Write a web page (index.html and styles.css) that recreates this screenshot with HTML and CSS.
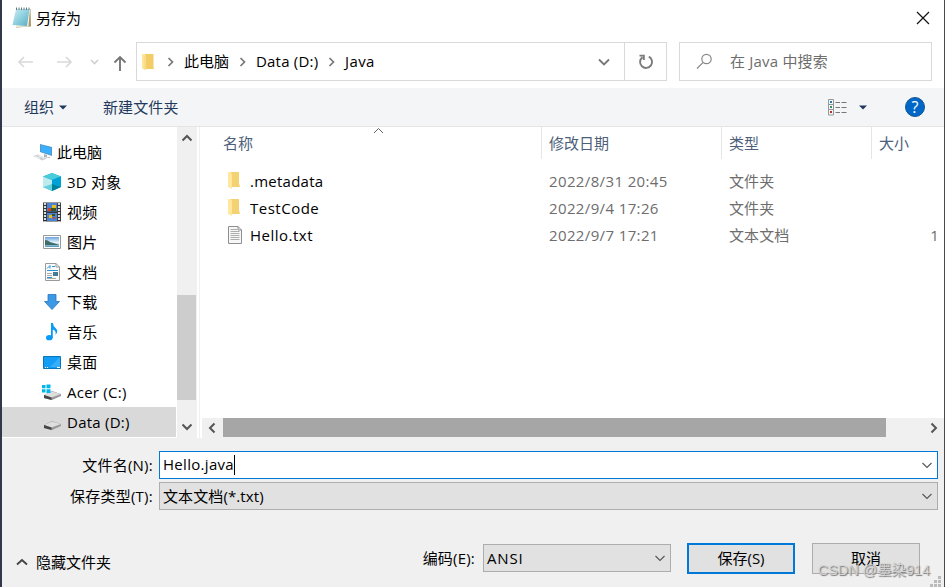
FILE: index.html
```html
<!DOCTYPE html>
<html lang="zh-CN">
<head>
<meta charset="utf-8">
<title>另存为</title>
<link rel="stylesheet" href="styles.css">
</head>
<body>
<div class="dialog">
  <header class="titlebar">
    <svg class="notepad" width="20" height="21" viewBox="0 0 20 21">
      <defs><linearGradient id="np" x1="0" y1="0" x2="1" y2="1"><stop offset="0" stop-color="#c9edf3"/><stop offset=".5" stop-color="#8fd0de"/><stop offset="1" stop-color="#55abc4"/></linearGradient></defs>
      <path d="M5 2H18.500L19 19.500 4 20.500z" fill="#a89668"/>
      <path d="M4 2H18L16.500 19.500 4 20z" fill="#f3efe3"/>
      <path d="M4 2H17.500L15 19 .5 18z" fill="url(#np)"/>
      <path d="M4.500 .5v2.500M7 .5v2.500M9.500 .5v2.500M12 .5v2.500M14.500 .5v2.500M17 .5v2.500" stroke="#65797d"/>
    </svg>
    <span class="title">另存为</span>
    <svg class="close" width="14" height="14" viewBox="0 0 14 14"><path d="M1 1L13 13M13 1L1 13" fill="none" stroke="#111" stroke-width="1.2"/></svg>
  </header>

  <nav class="navbar">
    <svg class="arrows" width="134" height="39" viewBox="2 42 134 39" fill="none">
      <path d="M33 62H19M24 57L19 62L24 67M57 62H71M66 57L71 62L66 67" stroke="#d9d9d9" stroke-width="1.600"/>
      <path d="M91 60L94.500 63.500L98 60" stroke="#d0d0d0" stroke-width="1.600"/>
      <path d="M120 71V57M114.500 62.500L120 57L125.500 62.500" stroke="#777" stroke-width="1.900"/>
    </svg>
    <div class="address">
      <svg class="folder" width="14" height="18" viewBox="0 0 14 18"><path d="M4 1H12.500V14L13 16H4z" fill="#f2cd67"/><path d="M1 1H3.500L5 3V17L1 15.500z" fill="#ffe59a"/><path d="M5 3V17L3 16V3z" fill="#f9dc85"/></svg>
      <svg class="sep s1" width="7" height="10" viewBox="0 0 7 10"><path d="M1.500 1L5.500 5L1.500 9" fill="none" stroke="#777" stroke-width="1.700"/></svg>
      <span class="crumb c1">此电脑</span>
      <svg class="sep" width="7" height="10" viewBox="0 0 7 10"><path d="M1.500 1L5.500 5L1.500 9" fill="none" stroke="#777" stroke-width="1.700"/></svg>
      <span class="crumb c2">Data (D:)</span>
      <svg class="sep" width="7" height="10" viewBox="0 0 7 10"><path d="M1.500 1L5.500 5L1.500 9" fill="none" stroke="#777" stroke-width="1.700"/></svg>
      <span class="crumb c3">Java</span>
      <svg class="drop" width="12" height="8" viewBox="0 0 12 8"><path d="M1 1.500L6 6.500L11 1.500" fill="none" stroke="#777" stroke-width="1.900"/></svg>
      <div class="refresh"><svg width="16" height="16" viewBox="0 0 16 16"><path d="M10.800 2.600A6 6 0 1 1 4.400 3.200M1.500 1.600H5.800V6" fill="none" stroke="#7b7b7b" stroke-width="1.900"/></svg></div>
    </div>
    <div class="search">
      <svg width="17" height="17" viewBox="0 0 17 17"><circle cx="10.500" cy="6" r="4.700" fill="none" stroke="#888" stroke-width="1.200"/><path d="M7.200 9.400L1 15.500" stroke="#888" stroke-width="1.200"/></svg>
      <span>在 Java 中搜索</span>
    </div>
  </nav>

  <div class="toolbar">
    <span class="organize">组织</span>
    <svg width="8" height="5" viewBox="0 0 8 5"><path d="M0 .5H8L4 4.500z" fill="#1e395b"/></svg>
    <span class="newfolder">新建文件夹</span>
    <svg class="view" width="19" height="17" viewBox="0 0 19 17" fill="none">
      <path d="M.5.5H5.500V16H.5zM.5 5.500H5.500M.5 10.500H5.500" stroke="#92999d"/>
      <path d="M7.500 3.500H12M13.500 3.500H18.500M7.500 8.500H12M13.500 8.500H18.500M7.500 13.500H12M13.500 13.500H18.500" stroke="#777"/>
      <path d="M2 3h2" stroke="#277cad" stroke-width="2"/><path d="M2 8h2" stroke="#488567" stroke-width="2"/><path d="M2 13h2" stroke="#c52c17" stroke-width="2"/>
    </svg>
    <svg class="viewdrop" width="8" height="5" viewBox="0 0 8 5"><path d="M0 .5H8L4 4.500z" fill="#1e395b"/></svg>
    <span class="help">?</span>
  </div>

  <main class="main">
    <ul class="tree">
      <li class="root"><svg width="20" height="20" viewBox="0 0 20 20"><path d="M7 2L19 5V14L7 10z" fill="#5598c8"/><path d="M8 3L18 6V12.500L8 9.500z" fill="#38afff"/><path d="M11 12L14 13V15H17V16L11 15z" fill="#aab4bc"/><path d="M0 14L5 12.500 14 16.500 9 18.500z" fill="#cbd1d6"/><path d="M2 14.500L7 16.500M5 13.500L11 16" stroke="#f4f4f4"/></svg><span>此电脑</span></li>
      <li><svg width="20" height="20" viewBox="0 0 20 20"><path d="M1 4.500L10 1L19 4.500V15L10 19L1 15z" fill="#12aebf"/><path d="M1 4.500L10 8V19L1 15z" fill="#bdebee"/><path d="M1 4.500L10 1L19 4.500L10 8z" fill="#4acbdc"/><path d="M10 8L19 4.500V15L10 12z" fill="#00a1d6"/><path d="M10 12L19 15L10 19z" fill="#00829d"/><path d="M1 15L10 12V19z" fill="#64d1dc"/></svg><span>3D 对象</span></li>
      <li><svg width="20" height="20" viewBox="0 0 20 20"><path d="M1 .5H19V19.500H1z" fill="#333"/><path d="M5 1H15V9.500H5zM5 11H15V19H5z" fill="#4c83d2"/><path d="M3 1V19.500M17 1V19.500" stroke="#ddd" stroke-width="2.200" stroke-dasharray="2 1"/><path d="M10 3h4v3h-4zM7 13h3v3H7z" fill="#e6c019"/><path d="M6 6h3v3H6zM11 15h2v2h-2z" fill="#cf4030"/><path d="M9 6h5v3H9zM10 12h3v2h-3z" fill="#395622"/></svg><span>视频</span></li>
      <li><svg width="20" height="20" viewBox="0 0 20 20"><defs><linearGradient id="sky" x2="0" y2="1"><stop stop-color="#6ba4df"/><stop offset=".55" stop-color="#e6f4fc"/><stop offset="1" stop-color="#5193b8"/></linearGradient></defs><path d="M1.500 3.500H18.500V16.500H1.500z" fill="#fff" stroke="#999"/><path d="M3 5H17V15H3z" fill="url(#sky)"/><path d="M3 8Q6 8 8 10L13 11.500L17 13H3z" fill="#3f6c68"/></svg><span>图片</span></li>
      <li><svg width="20" height="20" viewBox="0 0 20 20"><path d="M3.500 1.500H14L17.500 5V18.500H3.500z" fill="#fafafa" stroke="#999"/><path d="M14 1.500V5H17.500" fill="none" stroke="#999"/><path d="M5 6.500L8 3.500V6.500M10 4.500H13M5 8.500H16M5 15.500H10" stroke="#2797d4" fill="none"/><path d="M5 11.500H10M5 13.500H10M5 16.500H14" stroke="#aaa"/><path d="M11 10H16V14H11z" fill="#477b93"/></svg><span>文档</span></li>
      <li><svg width="20" height="20" viewBox="0 0 20 20"><path d="M6 2.500H14V9.500H17.500L10 17.500L2.500 9.500H6z" fill="#3d98e6" stroke="#2375bb" stroke-width=".8"/></svg><span>下载</span></li>
      <li><svg width="20" height="20" viewBox="0 0 20 20"><ellipse cx="7.300" cy="15.700" rx="3.300" ry="2.600" fill="#0a9bf7"/><path d="M9 16V1H11Q11 4 13.500 6Q17 9 13.500 13Q14.500 8.500 10.800 7.500V16z" fill="#0a9bf7"/></svg><span>音乐</span></li>
      <li><svg width="20" height="20" viewBox="0 0 20 20"><path d="M1.500 4.500H18.500V16.500H1.500z" fill="#139df5" stroke="#0876b8"/><path d="M8 15L18 5V15z" fill="#35aefc"/><path d="M3 15.500H4M5 15.500H6M15 15.500H18" stroke="#fff"/></svg><span>桌面</span></li>
      <li><svg width="20" height="20" viewBox="0 0 20 20"><path d="M2 13L10 9L19 12V14L10 18L2 16z" fill="#999"/><path d="M2 13L10 9.500L19 12L9.500 15.500z" fill="#dedede"/><path d="M2 13L9.500 15.500V18L2 16z" fill="#454545"/><path d="M0 3H3.500V6.200H0zM4.500 2.500H8.500V6.200H4.500zM0 7.200H3.500V10.500H0zM4.500 7.200H8.500V11H4.500z" fill="#00b7ed"/></svg><span>Acer (C:)</span></li>
      <li class="selected"><svg width="20" height="20" viewBox="0 0 20 20"><path d="M2 13L10 9L19 12V14L10 18L2 16z" fill="#999"/><path d="M2 13L10 9.500L19 12L9.500 15.500z" fill="#dedede"/><path d="M2 13L9.500 15.500V18L2 16z" fill="#454545"/></svg><span>Data (D:)</span></li>
    </ul>
    <div class="vscroll">
      <svg width="12" height="8" viewBox="0 0 12 8"><path d="M1.500 6.500L6 2L10.500 6.500" fill="none" stroke="#555" stroke-width="2"/></svg>
      <div class="vthumb"></div>
      <svg class="down" width="12" height="8" viewBox="0 0 12 8"><path d="M1.500 1.500L6 6L10.500 1.500" fill="none" stroke="#555" stroke-width="2"/></svg>
    </div>
    <section class="files">
      <div class="grid head"><span>名称</span><span>修改日期</span><span>类型</span><span>大小</span>
        <svg class="sort" width="11" height="7" viewBox="0 0 11 7"><path d="M1 6L5.500 1.500L10 6" fill="none" stroke="#666"/></svg>
      </div>
      <div class="rows">
        <div class="grid row"><span class="name"><svg width="16" height="20" viewBox="0 0 16 20"><path d="M4 1H12V12L13 16H4z" fill="#f4d171"/><path d="M1 1H3.500L5 3V18L1 16z" fill="#ffe79f"/></svg>.metadata</span><span class="date">2022/8/31 20:45</span><span>文件夹</span><span></span></div>
        <div class="grid row"><span class="name wide"><svg width="16" height="20" viewBox="0 0 16 20"><path d="M4 1H12V12L13 16H4z" fill="#f4d171"/><path d="M1 1H3.500L5 3V18L1 16z" fill="#ffe79f"/></svg>TestCode</span><span class="date">2022/9/4 17:26</span><span>文件夹</span><span></span></div>
        <div class="grid row"><span class="name wide"><svg width="16" height="20" viewBox="0 0 16 20"><path d="M1.500 1.500H11L14.500 5V18.500H1.500z" fill="#f7f7f7" stroke="#8f8f8f"/><path d="M11 1.500V5H14.500" fill="none" stroke="#8f8f8f"/><path d="M3.500 4.500H10M3.500 6.500H12.500M3.500 8.500H12.500M3.500 10.500H12.500M3.500 12.500H12.500M3.500 14.500H12.500" stroke="#999" stroke-width=".8"/></svg>Hello.txt</span><span class="date">2022/9/7 17:21</span><span>文本文档</span><span class="size">1</span></div>
      </div>
      <div class="hscroll">
        <svg width="8" height="12" viewBox="0 0 8 12"><path d="M6.500 1.500L2 6L6.500 10.500" fill="none" stroke="#555" stroke-width="2"/></svg>
        <div class="hthumb"></div>
        <svg class="right" width="8" height="12" viewBox="0 0 8 12"><path d="M1.500 1.500L6 6L1.500 10.500" fill="none" stroke="#555" stroke-width="2"/></svg>
      </div>
    </section>
  </main>

  <section class="form">
    <div class="field"><label>文件名(N):</label><div class="box input"><span class="filename">Hello.java</span><i class="caret"></i><svg width="10" height="7" viewBox="0 0 10 7"><path d="M.5 1L5 5.500L9.500 1" fill="none" stroke="#555" stroke-width="1.100"/></svg></div></div>
    <div class="field"><label>保存类型(T):</label><div class="box"><span>文本文档(*.txt)</span><svg width="10" height="7" viewBox="0 0 10 7"><path d="M.5 1L5 5.500L9.500 1" fill="none" stroke="#555" stroke-width="1.100"/></svg></div></div>
  </section>

  <footer class="footer">
    <svg class="up" width="12" height="8" viewBox="0 0 12 8"><path d="M1 6.500L6 2L11 6.500" fill="none" stroke="#444" stroke-width="1.900"/></svg>
    <span class="hide">隐藏文件夹</span>
    <span class="enc">编码(E):</span>
    <div class="box combo"><span>ANSI</span><svg width="10" height="7" viewBox="0 0 10 7"><path d="M.5 1L5 5.500L9.500 1" fill="none" stroke="#555" stroke-width="1.100"/></svg></div>
    <div class="button primary">保存(S)</div>
    <div class="button">取消</div>
  </footer>
  <svg class="grip" width="11" height="11" viewBox="0 0 11 11"><path d="M8 0h3v3H8zM4 4h3v3H4zM8 4h3v3H8zM0 8h3v3H0zM4 8h3v3H4zM8 8h3v3H8z" fill="#bbb"/></svg>
  <span class="watermark">CSDN @墨染914</span>
</div>
</body>
</html>
```
FILE: styles.css
```css
* { box-sizing: border-box; }
body {
  margin: 0;
  font: 15px/20px "Open Sans", "Noto Sans CJK SC", sans-serif;
  color: #000;
  overflow: hidden;
}
svg { display: block; flex: none; }
span, label { white-space: nowrap; }
.dialog {
  position: relative;
  width: 945px;
  height: 587px;
  display: flex;
  flex-direction: column;
  background: #f0f0f0;
  border-left: 2px solid #30384a;
  border-right: 1px solid #4b4b4b;
}
.titlebar {
  height: 42px;
  padding: 0 14px 6px 10px;
  display: flex;
  align-items: center;
  background: #fff;
}
.notepad { margin-top: -1px; }
.title { margin-left: 4px; }
.close { margin-left: auto; }
.navbar {
  height: 46px;
  padding-right: 12px;
  display: flex;
  align-items: flex-start;
  background: #fff;
}
.address, .search {
  height: 39px;
  display: flex;
  align-items: center;
  border: 1px solid #d9d9d9;
}
.address { width: 531px; padding-left: 4px; }
.address span, .search span { padding-bottom: 2px; }
.s1 { margin-left: 12px; }
.crumb { margin: 0 9px 0 10px; }
.c1 { width: 45px; margin-right: 10px; }
.c2 { width: 64px; margin-right: 8px; letter-spacing: .2px; }
.c3 { margin-left: 10px; letter-spacing: .4px; }
.drop { margin-left: auto; margin-right: 14px; }
.refresh {
  width: 42px;
  height: 37px;
  display: grid;
  place-items: center;
  border-left: 1px solid #d9d9d9;
}
.search {
  width: 253px;
  margin-left: 12px;
  padding-left: 16px;
  gap: 17px;
  color: #6d6d6d;
  letter-spacing: .2px;
}
.toolbar {
  height: 39px;
  padding: 0 19px 0 22px;
  display: flex;
  align-items: center;
  background: #f4f5f7;
  border-bottom: 1px solid #e5e5e5;
  color: #1e395b;
}
.organize { margin-right: 5px; }
.newfolder { margin-left: 36px; letter-spacing: .1px; }
.view { margin-left: auto; }
.viewdrop { margin: 0 38px 0 12px; }
.help {
  width: 20px;
  height: 20px;
  border: 1px solid #15558d;
  border-radius: 50%;
  background: #0067c9;
  color: #fff;
  font-size: 16px;
  line-height: 18px;
  text-align: center;
}
.main { height: 311px; display: flex; background: #fff; }
.tree {
  width: 174px;
  margin: 0;
  padding: 10px 0 0;
  list-style: none;
}
.tree li {
  height: 30px;
  padding-left: 40px;
  display: flex;
  align-items: center;
  gap: 5px;
  letter-spacing: .25px;
}
.tree .root { padding-left: 31px; gap: 4px; letter-spacing: 0; }
.tree .selected { background: #d9d9d9; }
.vscroll {
  width: 20px;
  margin-left: 1px;
  padding: 7px 1px 7px 0;
  display: flex;
  flex-direction: column;
  align-items: center;
  background: #f0f0f0;
}
.vthumb { width: 19px; height: 105px; margin-top: 153px; align-self: flex-start; background: #cdcdcd; }
.down { margin-top: auto; }
.files {
  flex: 1;
  min-width: 0;
  margin-left: 2px;
  border-left: 1px solid #f0f0f0;
  display: flex;
  flex-direction: column;
}
.grid { display: grid; grid-template-columns: 341px 180px 150px 1fr; }
.head { position: relative; height: 32px; color: #4c607a; }
.head span { padding: 6px 0 0 7px; border-left: 1px solid #e5e5e5; }
.head span:first-child { padding-left: 23px; border-left: 0; }
.sort { position: absolute; left: 173px; top: 0; }
.rows { padding-top: 8px; }
.row { height: 27px; align-items: center; color: #6d6d6d; }
.row span { padding-left: 8px; letter-spacing: .1px; }
.row .name { display: flex; align-items: center; gap: 7px; padding-left: 27px; color: #000; letter-spacing: .25px; }
.row .wide { letter-spacing: .5px; }
.row .date { letter-spacing: .37px; }
.row .size { padding: 0 5px 0 0; text-align: right; }
.hscroll {
  height: 20px;
  margin: auto 0 0 2px;
  padding: 0 6px 1px 6px;
  display: flex;
  align-items: center;
  background: #f0f0f0;
}
.hthumb { width: 663px; height: 19px; margin-left: 7px; background: #a6a6a6; }
.right { margin-left: auto; }
.form {
  padding: 13px 6px 0 0;
  display: grid;
  gap: 3px;
}
.field { display: grid; grid-template-columns: 151px 1fr; column-gap: 6px; align-items: center; }
.field label { text-align: right; letter-spacing: .25px; }
.box {
  height: 28px;
  padding: 0 5px 0 3px;
  display: flex;
  align-items: center;
  background: #e1e1e1;
  border: 1px solid #adadad;
  letter-spacing: .1px;
}
.box svg { margin-left: auto; }
.box.input { background: #fff; border-color: #0078d7; letter-spacing: .3px; }
.box.input span { padding-bottom: 2px; }
.caret { width: 1px; height: 20px; background: #000; }
.footer {
  height: 31px;
  margin-top: 33px;
  padding: 0 24px 0 14px;
  display: flex;
  align-items: center;
}
.up { margin-top: 7px; }
.hide { margin: 7px 0 0 8px; }
.enc { margin: -1px 8px 0 auto; letter-spacing: .2px; }
.combo { width: 188px; margin: -1px 16px 0 0; letter-spacing: .8px; }
.combo span { padding-bottom: 1px; }
.button {
  width: 108px;
  height: 31px;
  line-height: 29px;
  text-align: center;
  border: 1px solid #adadad;
  background: #e1e1e1;
}
.primary { margin-right: 17px; line-height: 27px; border: 2px solid #0078d7; }
.grip { position: absolute; right: 3px; bottom: 0; }
.watermark {
  position: absolute;
  right: 14px;
  bottom: 7px;
  font: 14.4px/20px "Liberation Sans", "Noto Sans CJK SC", sans-serif;
  color: rgba(215, 215, 215, .85);
  text-shadow: 1px 1px 1px #777;
}
```
